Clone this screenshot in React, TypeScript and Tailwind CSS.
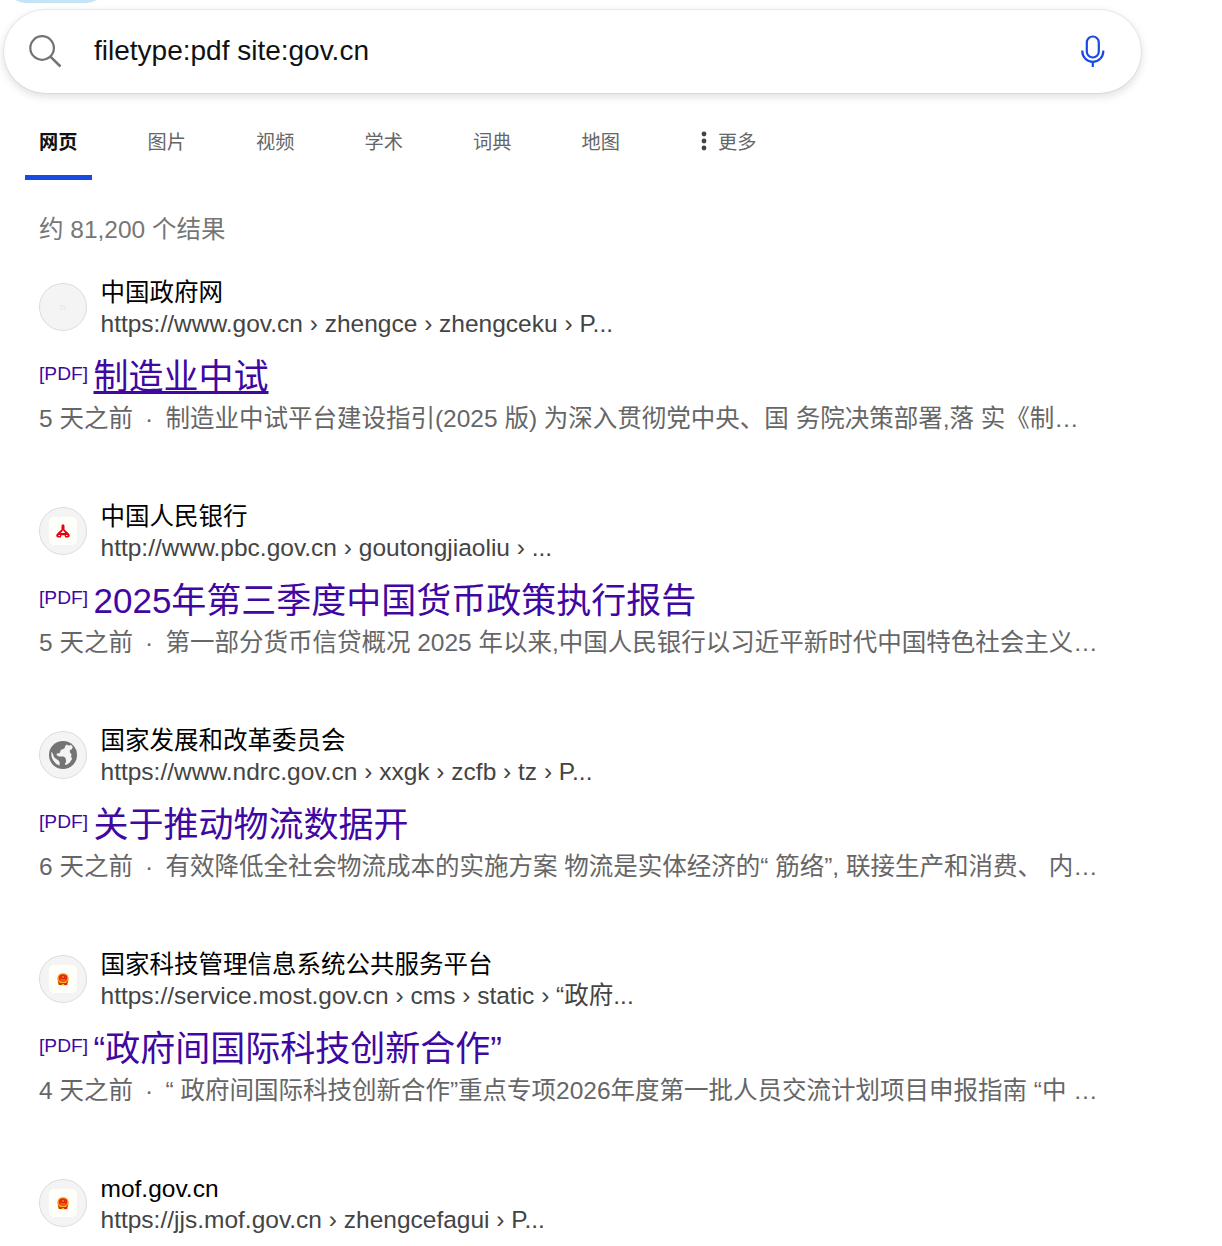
import type { ReactNode } from 'react';

function Search() {
  return (
    <svg className="-mt-[1px]" width="34" height="34" viewBox="0 0 34 34" fill="none" stroke="#737373" strokeWidth="2.2">
      <circle cx="14.1" cy="14" r="11.8" />
      <path d="M22.4 22.6 32.5 32.5" strokeWidth="2.5" />
    </svg>
  );
}

function Mic() {
  return (
    <svg className="-mt-[1px]" width="24" height="32" viewBox="0 0 24 32" fill="none" stroke="#174ae4" strokeWidth="2.2">
      <rect x="5.8" y="1.5" width="12" height="21" rx="6" />
      <path d="M1.3 15.5v.8a10.5 10.5 0 0 0 21 0v-.8M11.8 26.8V32" />
    </svg>
  );
}

function Faded() {
  return <span className="text-[7px] leading-none text-[#e6e6e6]">ZL</span>;
}

function Tile({ children }: { children: ReactNode }) {
  return <span className="flex h-7 w-7 items-center justify-center rounded-[5px] bg-[#fffffa]">{children}</span>;
}

function Bank() {
  return (
    <Tile>
      <svg width="14" height="14" viewBox="0 0 14 14" fill="#e50012">
        <path d="M7 0 8.500 1.500V5.500L13 9.800C14.300 11.200 14 13.200 12 13.400H9.200L8.500 11.300H5.500L4.800 13.400H2C0 13.200-.3 11.200 1 9.800L5.500 5.500V1.500Z" />
        <path d="M7 6.300 9.200 9.100H4.800ZM2.500 11h1.500v.9H2.500ZM10 11h1.500v.9H10Z" fill="#fff4f0" />
      </svg>
    </Tile>
  );
}

function Emblem() {
  return (
    <Tile>
      <svg width="12" height="13" viewBox="0 0 12 13">
        <path d="M6 .3C2.500.300.300 2.500.300 5.700c0 1.700.5 3 1.300 3.900L1.400 12c1.500.5 7.700.5 9.200 0l-.2-2.400c.8-.9 1.300-2.200 1.300-3.900C11.700 2.500 9.500.3 6 .3Z" fill="#f3a52b" />
        <ellipse cx="6" cy="5" rx="4.300" ry="3.700" fill="#e8290c" />
        <path d="M1.200 7.600 3 9.800h6l1.800-2.200v1.600L10 12H2l-.8-2.800Z" fill="#e8290c" />
        <path d="M3.300 6.400h5.400v1.200H3.300zM5 3.200h2v1.300H5z" fill="#f58a20" />
        <path d="M3 9h6v.9H3zM5 11h2v1H5z" fill="#f6bd27" />
      </svg>
    </Tile>
  );
}

function Globe() {
  return (
    <svg width="28" height="28" viewBox="0 0 28 28">
      <circle cx="14" cy="14" r="14" fill="#747474" />
      <path d="M2.500 10.800 3.600 12.300 5.300 16.600 9.800 19.700 10.600 21.200V24.600C5.600 22.900 1.300 17.200 2.500 10.800Z" fill="#f4f4f4" />
      <path d="M16.600 4.500 17.800 3.600 20 4.700 21.800 3.800 23.800 6 22.600 8.500 20.800 9 21 11.600 22.500 13.500 22.100 16 23.200 17.700 20.600 21.700 17.200 24 15.700 23.300 17.200 20.500 16.500 17 14.700 15.500H10L7.700 14.200V12.600L10.600 12.200 11.800 9 15.300 7.600Z" fill="#f4f4f4" />
    </svg>
  );
}

type Result = { icon: ReactNode; name: string; url: string; title?: string; age?: string; text?: string; underlined?: boolean };

const results: Result[] = [
  { icon: <Faded />, name: '中国政府网', url: 'https://www.gov.cn › zhengce › zhengceku › P...', title: '制造业中试', age: '5 天之前', text: '制造业中试平台建设指引(2025 版) 为深入贯彻党中央、国 务院决策部署,落 实《制…', underlined: true },
  { icon: <Bank />, name: '中国人民银行', url: 'http://www.pbc.gov.cn › goutongjiaoliu › ...', title: '2025年第三季度中国货币政策执行报告', age: '5 天之前', text: '第一部分货币信贷概况 2025 年以来,中国人民银行以习近平新时代中国特色社会主义…' },
  { icon: <Globe />, name: '国家发展和改革委员会', url: 'https://www.ndrc.gov.cn › xxgk › zcfb › tz › P...', title: '关于推动物流数据开', age: '6 天之前', text: '有效降低全社会物流成本的实施方案 物流是实体经济的“ 筋络”, 联接生产和消费、 内…' },
  { icon: <Emblem />, name: '国家科技管理信息系统公共服务平台', url: 'https://service.most.gov.cn › cms › static › “政府...', title: '“政府间国际科技创新合作”', age: '4 天之前', text: '“ 政府间国际科技创新合作”重点专项2026年度第一批人员交流计划项目申报指南 “中 …' },
  { icon: <Emblem />, name: 'mof.gov.cn', url: 'https://jjs.mof.gov.cn › zhengcefagui › P...' },
];

function ResultItem({ r }: { r: Result }) {
  return (
    <article className="h-[224px] whitespace-nowrap">
      <div className="flex gap-[13.5px]">
        <span className="mt-[7px] flex h-12 w-12 shrink-0 items-center justify-center rounded-full border border-[#dcdcdc] bg-[#f4f4f4]">{r.icon}</span>
        <div className="text-[24.5px]">
          <div className="h-8 leading-[33px] text-black">{r.name}</div>
          <div className="h-8 leading-[31px] text-[#444]">{r.url}</div>
        </div>
      </div>
      {r.title && (
        <>
          <h2 className="mt-[12px] flex h-[50px] text-[#4007a2]">
            <span className="w-[54.5px] text-[19.2px] leading-[43px]">[PDF]</span>
            <a className={r.underlined ? 'text-[35px] leading-[50px] underline decoration-[3px] underline-offset-[2px] [text-decoration-skip-ink:none]' : 'text-[35px] leading-[50px]'}>{r.title}</a>
          </h2>
          <p className="flex text-[24.5px] leading-[34px] text-[#666]">
            <span>{r.age}</span>
            <span className="w-[32.5px] text-center">·</span>
            <span>{r.text}</span>
          </p>
        </>
      )}
    </article>
  );
}

const tabs = ['网页', '图片', '视频', '学术', '词典', '地图'];

export default function App() {
  return (
    <main className="h-[1246px] w-[1222px] overflow-hidden bg-white font-['Liberation_Sans','Noto_Sans_CJK_SC',sans-serif]">
      <svg className="ml-[10px] block" width="91" height="3" viewBox="0 0 91 3">
        <path d="M5 0H87Q82 3 76 3H16Q10 3 5 0Z" fill="#c7e3f8" />
      </svg>
      <div className="mt-[7px] ml-1 flex h-[83px] w-[1137px] items-center rounded-full bg-white pr-[36px] pl-[24px] shadow-[0_0_0_1px_rgba(0,0,0,0.06),0_3px_8px_1px_rgba(0,0,0,0.12)]">
        <Search />
        <span className="ml-[32px] flex-1 pb-[2px] text-[28px] leading-8 text-[#111]">filetype:pdf site:gov.cn</span>
        <Mic />
      </div>
      <nav className="mt-[25px] ml-[25px] flex h-[62px] text-[19.2px] leading-[50px] text-[#666]">
        {tabs.map((t, i) => (
          <div key={t} className={i === 0 ? 'mr-[41.5px] w-[67px] border-b-[5px] border-[#174ae4] pl-[14px] font-bold text-[#111]' : 'mr-[41.5px] w-[67px] pl-[14px]'}>{t}</div>
        ))}
        <div className="ml-[25px] flex">
          <svg className="mt-[13px] mr-[11px]" width="6" height="20" viewBox="0 0 6 20" fill="#444">
            <circle cx="3" cy="3" r="2.400" /><circle cx="3" cy="10" r="2.400" /><circle cx="3" cy="17" r="2.400" />
          </svg>
          更多
        </div>
      </nav>
      <section className="ml-[39px]">
        <div className="mt-[33px] mb-[31px] h-8 text-[24.5px] leading-[34px] text-[#767676]">约 81,200 个结果</div>
        {results.map((r) => <ResultItem key={r.name} r={r} />)}
      </section>
    </main>
  );
}
